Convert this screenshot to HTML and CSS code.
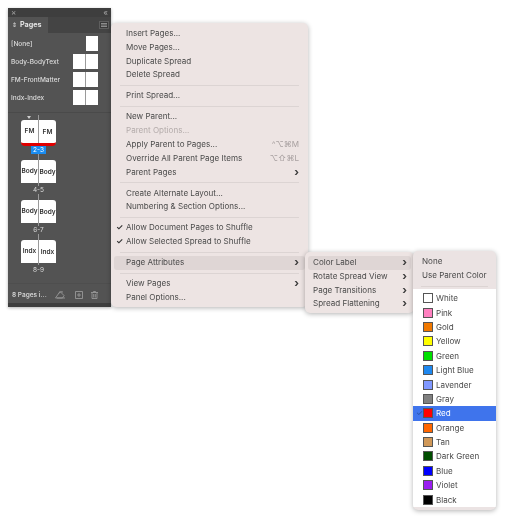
FILE: index.html
```html
<!DOCTYPE html>
<html lang="en">
<head>
    <meta charset="UTF-8">
    <title>Pages panel menu</title>
    <link rel="stylesheet" href="styles.css">
</head>
<body>

    <div class="panel">
        <div class="panel-top">
            <span class="close">&times;</span>
            <span class="collapse">&laquo;</span>
        </div>
        <div class="tab-bar">
            <div class="tab"><span class="tab-arrows">&#8661;</span>Pages</div>
            <div class="panel-menu-btn">
                <svg width="8" height="6" viewBox="0 0 8 6"><path d="M0 1h8M0 3h8M0 5h8" stroke="#a8a8a8" stroke-width="1"/></svg>
            </div>
        </div>

        <div class="parents">
            <div class="parent-row">
                <span>[None]</span>
                <div class="parent-thumb"><i></i></div>
            </div>
            <div class="parent-row">
                <span>Body-BodyText</span>
                <div class="parent-thumb"><i></i><i></i></div>
            </div>
            <div class="parent-row">
                <span>FM-FrontMatter</span>
                <div class="parent-thumb"><i></i><i></i></div>
            </div>
            <div class="parent-row">
                <span>Indx-Index</span>
                <div class="parent-thumb"><i></i><i></i></div>
            </div>
        </div>

        <div class="spreads">
            <div class="spread selected">
                <div class="spread-pages"><b>FM</b><b>FM</b></div>
                <div class="spread-label">2-3</div>
            </div>
            <div class="spread">
                <div class="spread-pages"><b>Body</b><b>Body</b></div>
                <div class="spread-label">4-5</div>
            </div>
            <div class="spread">
                <div class="spread-pages"><b>Body</b><b>Body</b></div>
                <div class="spread-label">6-7</div>
            </div>
            <div class="spread">
                <div class="spread-pages"><b>Indx</b><b>Indx</b></div>
                <div class="spread-label">8-9</div>
            </div>
        </div>

        <div class="panel-footer">
            <span class="page-count">8 Pages i...</span>
            <svg width="12" height="9" viewBox="0 0 12 9"><path d="M.5 8 5 1.500l4 4L7.500 8zM2 8h8M4 3.500a3 3 0 0 1 4-1.500" fill="none" stroke="#a0a0a0" stroke-width=".8"/></svg>
            <svg width="8" height="8" viewBox="0 0 8 8"><path d="M.5.5h7v7h-7zM4 2v4M2 4h4" fill="none" stroke="#a0a0a0" stroke-width=".8"/></svg>
            <svg width="7" height="8" viewBox="0 0 7 8"><path d="M0 1.500h7M2.500 1.500V.5h2v1M1 1.500v6h5v-6M2.700 3v3.500M4.300 3v3.500" fill="none" stroke="#a0a0a0" stroke-width=".8"/></svg>
        </div>
        <div class="panel-bottom"></div>
    </div>

    <div class="menu main-menu">
        <div class="item">Insert Pages...</div>
        <div class="item">Move Pages...</div>
        <div class="item">Duplicate Spread</div>
        <div class="item">Delete Spread</div>
        <div class="sep"></div>
        <div class="item">Print Spread...</div>
        <div class="sep"></div>
        <div class="item">New Parent...</div>
        <div class="item disabled">Parent Options...</div>
        <div class="item">Apply Parent to Pages...<span class="keys">^&#8997;&#8984;M</span></div>
        <div class="item">Override All Parent Page Items<span class="keys">&#8997;&#8679;&#8984;L</span></div>
        <div class="item">Parent Pages<span class="more">&#8250;</span></div>
        <div class="sep"></div>
        <div class="item">Create Alternate Layout...</div>
        <div class="item">Numbering &amp; Section Options...</div>
        <div class="sep"></div>
        <div class="item"><span class="check">&#10003;</span>Allow Document Pages to Shuffle</div>
        <div class="item"><span class="check">&#10003;</span>Allow Selected Spread to Shuffle</div>
        <div class="sep"></div>
        <div class="item open">Page Attributes<span class="more">&#8250;</span></div>
        <div class="sep"></div>
        <div class="item">View Pages<span class="more">&#8250;</span></div>
        <div class="item">Panel Options...</div>
    </div>

    <div class="menu attr-menu">
        <div class="item open">Color Label<span class="more">&#8250;</span></div>
        <div class="item">Rotate Spread View<span class="more">&#8250;</span></div>
        <div class="item">Page Transitions<span class="more">&#8250;</span></div>
        <div class="item">Spread Flattening<span class="more">&#8250;</span></div>
    </div>

    <div class="menu color-menu">
        <div class="color-head">
            <div class="item">None</div>
            <div class="item">Use Parent Color</div>
            <div class="sep"></div>
        </div>
        <div class="color-list">
            <div class="color"><i class="swatch white"></i>White</div>
            <div class="color"><i class="swatch pink"></i>Pink</div>
            <div class="color"><i class="swatch gold"></i>Gold</div>
            <div class="color"><i class="swatch yellow"></i>Yellow</div>
            <div class="color"><i class="swatch green"></i>Green</div>
            <div class="color"><i class="swatch lightblue"></i>Light Blue</div>
            <div class="color"><i class="swatch lavender"></i>Lavender</div>
            <div class="color"><i class="swatch gray"></i>Gray</div>
            <div class="color active"><span class="color-check">&#10003;</span><i class="swatch red"></i>Red</div>
            <div class="color"><i class="swatch orange"></i>Orange</div>
            <div class="color"><i class="swatch tan"></i>Tan</div>
            <div class="color"><i class="swatch darkgreen"></i>Dark Green</div>
            <div class="color"><i class="swatch blue"></i>Blue</div>
            <div class="color"><i class="swatch violet"></i>Violet</div>
            <div class="color"><i class="swatch black"></i>Black</div>
        </div>
    </div>

</body>
</html>
```

FILE: styles.css
```css
body {
    margin: 0;
    width: 508px;
    height: 520px;
    overflow: hidden;
    background: #fff;
    font-family: Inter, "Liberation Sans", sans-serif;
    filter: blur(0.35px);
}

/* Pages panel */
.panel {
    position: absolute;
    left: 8px;
    top: 8px;
    width: 103px;
    height: 299px;
    background: #535353;
    color: #e4e4e4;
    display: flex;
    flex-direction: column;
    box-shadow: 0 1px 3px rgba(0, 0, 0, 0.3);
}

.panel-top {
    height: 9px;
    background: #3e3e3e;
    display: flex;
    justify-content: space-between;
    align-items: center;
    padding: 0 3px;
    font-size: 8px;
    line-height: 9px;
    color: #a5a5a5;
}

.tab-bar {
    height: 16px;
    background: #444;
    display: flex;
    justify-content: space-between;
}

.tab {
    width: 40px;
    background: #535353;
    font-size: 7.2px;
    font-weight: 700;
    line-height: 16px;
    display: flex;
    gap: 3px;
    padding-left: 4px;
    box-sizing: border-box;
}

.tab-arrows {
    font-weight: 400;
    font-size: 6px;
}

.panel-menu-btn {
    width: 10px;
    height: 8px;
    margin: 4px 2px 0 0;
    background: #3a3a3a;
    border: 1px solid #5e5e5e;
    box-sizing: border-box;
    display: flex;
    align-items: center;
    justify-content: center;
}

.panel-menu-btn svg {
    width: 6px;
}

.parents {
    height: 80px;
    box-sizing: border-box;
    padding: 3px 13px 0 3px;
    border-bottom: 1px solid #4a4a4a;
    display: flex;
    flex-direction: column;
    gap: 3px;
}

.parent-row {
    height: 15px;
    display: flex;
    justify-content: space-between;
    align-items: center;
    font-size: 6.5px;
    font-weight: 500;
    color: #dcdcdc;
}

.parent-thumb {
    display: flex;
    gap: 1px;
    background: #9a9a9a;
}

.parent-thumb i {
    display: block;
    width: 12px;
    height: 15px;
    background: #fff;
}

.spreads {
    flex: 1;
    position: relative;
    display: flex;
    flex-direction: column;
    align-items: flex-start;
    padding: 7px 0 0 13px;
    gap: 6px;
}

/* thread that joins the spreads, and the current page marker */
.spreads::before {
    content: "";
    position: absolute;
    left: 30px;
    top: 2px;
    width: 1px;
    height: 150px;
    background: #9a9a9a;
}

.spreads::after {
    content: "";
    position: absolute;
    left: 19px;
    top: 3px;
    border-left: 2.5px solid transparent;
    border-right: 2.5px solid transparent;
    border-top: 3px solid #cfcfcf;
}

.spread {
    position: relative;
    display: flex;
    flex-direction: column;
    align-items: center;
    width: 35px;
    height: 34px;
}

.spread-pages {
    width: 35px;
    height: 23px;
    display: flex;
    background: #fff;
    border-radius: 3px 3px 0 0;
    box-sizing: border-box;
    align-items: center;
}

.spread-pages b {
    flex: 1;
    text-align: center;
    font-size: 6.5px;
    font-weight: 600;
    color: #333;
    position: relative;
}

.spread-pages b:first-child {
    border-right: 1px solid #9a9a9a;
    line-height: 23px;
}

.selected .spread-pages {
    height: 26px;
    border-bottom: 3px solid #e00000;
    border-radius: 3px 3px 4px 4px;
}

.spread-label {
    font-size: 6.5px;
    line-height: 8px;
    margin-top: 3px;
    padding: 0 2px;
    color: #dcdcdc;
    background: #535353;
}

.selected .spread-label {
    background: #1a8cf0;
    color: #fff;
    margin-top: 0;
    width: 15px;
    padding: 0;
    text-align: center;
}

.panel-footer {
    height: 20px;
    display: flex;
    align-items: center;
    padding: 2px 0 0 4px;
    box-sizing: border-box;
    border-top: 1px solid #4e4e4e;
    font-size: 6.5px;
    font-weight: 600;
    color: #d0d0d0;
    gap: 8px;
}

.page-count {
    white-space: nowrap;
}

.panel-bottom {
    height: 4px;
    background: #3e3e3e;
}

/* Menus */
.menu {
    position: absolute;
    background: #ede4e3;
    border-radius: 5px;
    box-shadow: 0 1px 5px rgba(0, 0, 0, 0.3);
    color: #4a4a4a;
    font-size: 8.05px;
    box-sizing: border-box;
}

.item {
    height: 13.8px;
    line-height: 13.8px;
    padding: 0 9px 0 15px;
    position: relative;
    white-space: nowrap;
    display: flex;
    justify-content: space-between;
}

.disabled {
    color: #b4acab;
}

.keys {
    color: #a8a0a0;
}

.more {
    font-size: 11px;
    font-weight: 700;
    color: #3a3a3a;
    line-height: 12px;
}

.check {
    position: absolute;
    left: 5px;
    font-weight: 700;
    color: #333;
}

.open {
    background: #dfd6d5;
    border-radius: 3px;
    margin: 0 3px;
    padding: 0 6px 0 12px;
}

.sep {
    height: 1px;
    background: #dcd4d3;
    margin: 3.1px 9px;
}

.main-menu {
    left: 111px;
    top: 23px;
    width: 197px;
    height: 284px;
    padding-top: 4px;
}

.attr-menu {
    left: 305px;
    top: 252px;
    width: 109px;
    height: 61px;
    padding-top: 4px;
}

.attr-menu .item {
    padding-left: 8px;
    padding-right: 7px;
}

.attr-menu .open {
    padding-left: 5px;
    padding-right: 4px;
}

.color-menu {
    left: 413px;
    top: 251px;
    width: 83px;
    height: 259px;
    background: #ebe3e3;
    overflow: hidden;
}

.color-head {
    padding-top: 4px;
    height: 38px;
    box-sizing: border-box;
}

.color-head .item {
    padding-left: 9px;
}

.color-head .sep {
    margin: 3px 8px 0;
}

.color-list {
    padding-top: 2px;
    background: #fff;
}

.color {
    height: 14.4px;
    display: flex;
    align-items: center;
    gap: 3px;
    padding-left: 10px;
    position: relative;
}

.active {
    background: #3f74ec;
    color: #fff;
}

.color-check {
    position: absolute;
    left: 3px;
    color: #2a4f9e;
    font-size: 8px;
}

.swatch {
    display: block;
    width: 8px;
    height: 8px;
    border: 1px solid #555;
}

.white { background: #fff; }
.pink { background: #ff80c0; }
.gold { background: #f07800; }
.yellow { background: #ffff00; }
.green { background: #00e000; }
.lightblue { background: #1e88f0; }
.lavender { background: #8098ff; }
.gray { background: #808080; }
.red { background: #ff0000; }
.orange { background: #ff6600; }
.tan { background: #d09858; }
.darkgreen { background: #004d00; }
.blue { background: #0000ff; }
.violet { background: #9a1ef0; }
.black { background: #000; }
```
